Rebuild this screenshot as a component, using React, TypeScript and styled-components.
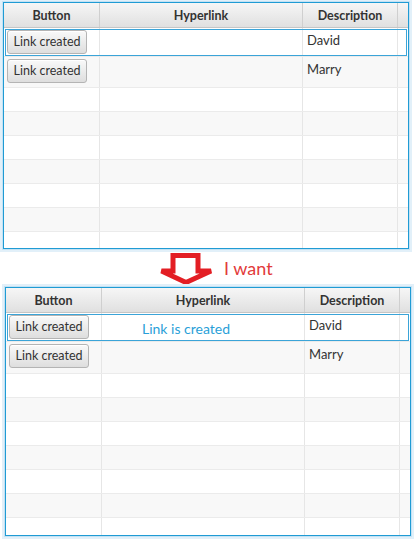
import React from "react";
import styled, { createGlobalStyle } from "styled-components";

const Global = createGlobalStyle`
  html, body { margin: 0; padding: 0; background: #ffffff; }
  body { font-family: Lato, "Open Sans", "Liberation Sans", sans-serif; }
  * { box-sizing: border-box; }
`;

const Page = styled.div`
  width: 419px;
  height: 540px;
  display: flex;
  flex-direction: column;
  overflow: hidden;
`;

const Table = styled.div<{ $left: number; $top: number; $height: number }>`
  margin-left: ${(p) => p.$left}px;
  margin-top: ${(p) => p.$top}px;
  width: 406px;
  height: ${(p) => p.$height}px;
  border: 1px solid #1f9bd4;
  box-shadow: 0 0 0 1px #c4e2f4, 0 0 0 3px #e2f0f9;
  background: #ffffff;
  display: flex;
  flex-direction: column;
  overflow: hidden;
  flex-shrink: 0;
`;

const COLS = "96px 203px 95px 1fr";

const HeaderRow = styled.div`
  display: grid;
  grid-template-columns: ${COLS};
  height: 25px;
  flex-shrink: 0;
  border-bottom: 1px solid #c5c5c5;
  background: linear-gradient(#f6f6f6, #e0e0e0);
`;

const HeaderCell = styled.div`
  border-right: 1px solid #cfcfcf;
  display: flex;
  align-items: center;
  justify-content: center;
  font-weight: 700;
  font-size: 12.5px;
  color: #333333;
  padding-top: 1px;
  &:last-child { border-right: none; }
`;

const Row = styled.div<{ $h: number; $odd: boolean; $selected: boolean }>`
  display: grid;
  grid-template-columns: ${COLS};
  height: ${(p) => p.$h}px;
  flex-shrink: 0;
  border-bottom: 1px solid #ebebeb;
  background: ${(p) => (p.$odd ? "#f8f8f8" : "#ffffff")};
  outline: ${(p) => (p.$selected ? "1px solid #3ba4d8" : "none")};
  outline-offset: -2px;
`;

const Cell = styled.div`
  border-right: 1px solid #e6e6e6;
  font-size: 13px;
  color: #333333;
  &:last-child { border-right: none; }
`;

const ButtonCell = styled(Cell)`
  padding: 2px 0 0 3px;
`;

const LinkCell = styled(Cell)`
  display: flex;
  align-items: center;
  padding: 2px 0 0 40px;
`;

const DescCell = styled(Cell)`
  padding: 4px 0 0 4px;
`;

const ActionButton = styled.button`
  width: 80px;
  height: 24px;
  border: 1px solid #b4b4b4;
  border-radius: 3px;
  background: linear-gradient(#f9f9f9, #dedede);
  font-family: inherit;
  font-size: 12.5px;
  color: #333333;
  padding: 0 0 1px;
  box-shadow: inset 0 1px 0 #ffffff;
`;

const Link = styled.span`
  color: #2a9fd8;
  font-size: 14px;
`;

const Band = styled.div`
  height: 38px;
  display: flex;
  align-items: flex-start;
  padding: 0 0 0 158px;
  flex-shrink: 0;
`;

const Want = styled.span`
  color: #e23a3a;
  font-size: 18px;
  margin: 8px 0 0 8px;
  line-height: 22px;
`;

type RowData = { h: number; button?: boolean; link?: string; desc?: string };

const BodyRows = ({ rows, showLink }: { rows: RowData[]; showLink: boolean }) => (
  <>
    {rows.map((r, i) => (
      <Row key={i} $h={r.h} $odd={i % 2 === 1} $selected={i === 0}>
        <ButtonCell>{r.button && <ActionButton>Link created</ActionButton>}</ButtonCell>
        <LinkCell>{showLink && r.link && <Link>{r.link}</Link>}</LinkCell>
        <DescCell>{r.desc}</DescCell>
        <Cell />
      </Row>
    ))}
  </>
);

const Header = () => (
  <HeaderRow>
    <HeaderCell>Button</HeaderCell>
    <HeaderCell>Hyperlink</HeaderCell>
    <HeaderCell>Description</HeaderCell>
    <HeaderCell />
  </HeaderRow>
);

const Arrow = () => (
  <svg width="58" height="38" viewBox="0 0 58 38">
    <polygon
      points="15,6.5 40,6.5 40,22 53,22 28,33.5 3.5,22 15,22"
      fill="#ffffff"
      stroke="#e31e24"
      strokeWidth="5"
      strokeLinejoin="miter"
    />
  </svg>
);

const makeRows = (first: number, second: number): RowData[] => [
  { h: first, button: true, link: "Link is created", desc: "David" },
  { h: second, button: true, desc: "Marry" },
  ...Array.from({ length: 8 }, () => ({ h: 24 })),
];

export default function App() {
  return (
    <>
      <Global />
      <Page>
        <Table $left={3} $top={2} $height={247}>
          <Header />
          <BodyRows rows={makeRows(29, 31)} showLink={false} />
        </Table>
        <Band>
          <Arrow />
          <Want>I want</Want>
        </Band>
        <Table $left={5} $top={0} $height={249}>
          <Header />
          <BodyRows rows={makeRows(29, 32)} showLink={true} />
        </Table>
      </Page>
    </>
  );
}
